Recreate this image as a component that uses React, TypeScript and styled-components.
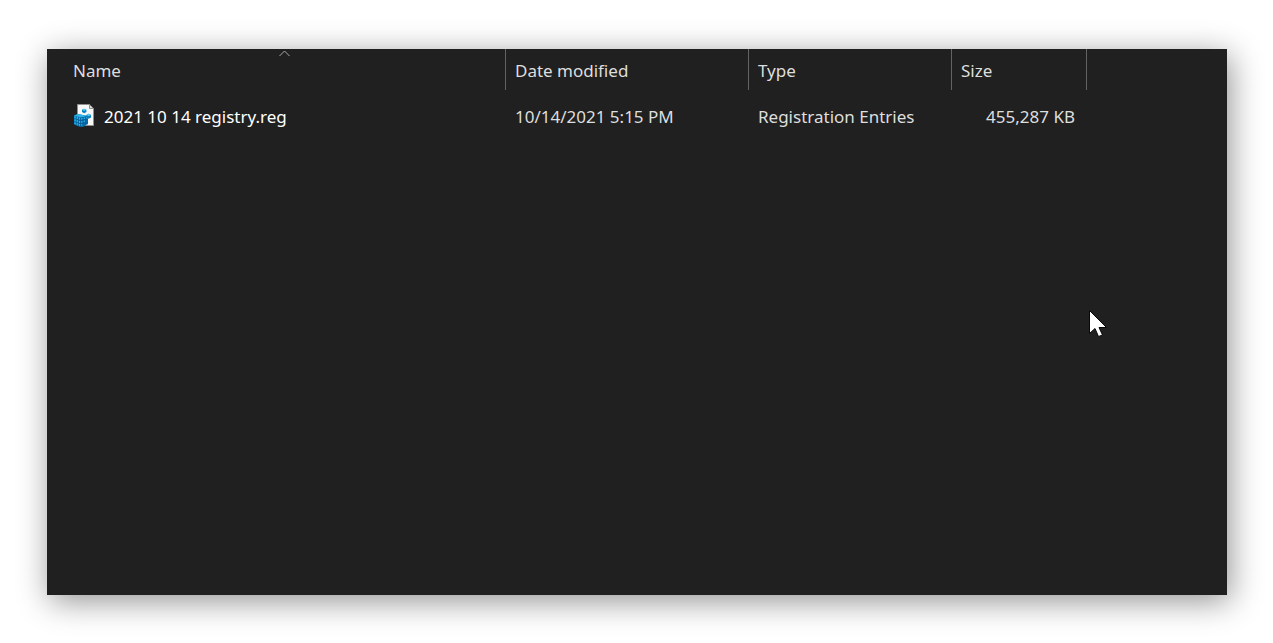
import React from "react";
import styled, { createGlobalStyle } from "styled-components";

const GlobalStyle = createGlobalStyle`
  *, *::before, *::after { box-sizing: border-box; }
  body {
    margin: 0;
    background: #ffffff;
    font-family: "Segoe UI", "Noto Sans", "Open Sans", sans-serif;
    font-size: 17px;
    line-height: 24px;
  }
`;

const Page = styled.main`
  display: flex;
  min-height: 100vh;
  padding: 49px 46px 48px 47px;
`;

const Window = styled.section`
  position: relative;
  flex: 1;
  min-width: 0;
  background: #202020;
  box-shadow: 3px 6px 30px rgba(0, 0, 0, 0.43);
`;

const FileTable = styled.table`
  width: 100%;
  table-layout: fixed;
  border-collapse: separate;
  border-spacing: 0;
  color: #dedede;
`;

const Column = styled.col<{ $width?: number }>`
  width: ${({ $width }) => ($width ? `${$width}px` : "auto")};
`;

const HeaderCell = styled.th<{ $first?: boolean }>`
  position: relative;
  height: 41px;
  padding: 0;
  border-right: 1px solid #636363;
  font-weight: 400;
  text-align: left;

  button {
    display: block;
    width: 100%;
    height: 41px;
    padding: 2px 9px 0 ${({ $first }) => ($first ? 26 : 9)}px;
    border: 0;
    background: transparent;
    color: inherit;
    font: inherit;
    text-align: left;
  }
`;

const SortArrow = styled.svg`
  position: absolute;
  top: 0;
  left: 232px;
  width: 12px;
  height: 8px;
`;

const Cell = styled.td<{ $first?: boolean; $end?: boolean }>`
  height: 54px;
  padding: 0 ${({ $end }) => ($end ? 12 : 9)}px 0 ${({ $first }) => ($first ? 26 : 9)}px;
  text-align: ${({ $end }) => ($end ? "right" : "left")};
  white-space: nowrap;
`;

const FileLink = styled.a`
  display: flex;
  align-items: center;
  gap: 9px;
  color: #ffffff;
  text-decoration: none;
`;

const FileIcon = styled.svg`
  flex: none;
  width: 22px;
  height: 26px;
`;

const Pointer = styled.svg`
  position: absolute;
  top: 260px;
  right: 119px;
  width: 20px;
  height: 30px;
`;

const RegistryIcon = () => (
  <FileIcon viewBox="0 0 22 26" aria-hidden="true">
    <path d="M4.5 .5H16.5L20.5 4.5V21.5H4.5Z" fill="#f7f7f7" stroke="#8f8f8f" />
    <path d="M16.5 .5V4.5H20.5Z" fill="#dcdcdc" stroke="#8f8f8f" strokeLinejoin="round" />
    <path d="M1 11.5L5 10L10 11L15 12V20L12 21V22L7.5 23L1 20.5Z" fill="#0a7fbe" />
    <path d="M1 11.5L5 10L15 12L7.5 13.5Z" fill="#2fb4e8" />
    <path d="M7.5 13.5L15 12V20L12 21V22L7.5 23Z" fill="#0a6cab" />
    <path d="M1 14.5L7.5 16.5L15 15M1 17.5L7.5 19.7L15 18M3.2 12V21M5.4 12.7V22M7.5 13.5V23M10 13V22.5M12.5 12.6V21.5" stroke="#07588c" strokeWidth=".5" fill="none" />
    <path d="M2.1 12.5V14.2M4.3 13.2V14.9M6.5 14V15.6M2.1 15.5V17.2M4.3 16.3V18M6.5 17V18.7M2.1 18.5V20M4.3 19.2V20.8M6.5 20V21.6M8.8 14V15.6M11.3 13.4V15M13.8 13V14.4M8.8 17V18.7M11.3 16.5V18M8.8 20.3V21.6" stroke="#35baf0" strokeWidth="1.1" />
    <path d="M9 5.8L11.2 4.7L13.4 5.8V8L11.2 9.3L9 8Z" fill="#0a7fbe" />
    <path d="M9 5.8L11.2 4.7L13.4 5.8L11.2 7Z" fill="#4fcdf7" />
    <path d="M13.4 11L15.7 9.8L18 11V13.4L15.7 14.7L13.4 13.4Z" fill="#0a7fbe" />
    <path d="M13.4 11L15.7 9.8L18 11L15.7 12.3Z" fill="#4fcdf7" />
  </FileIcon>
);

const columns = ["Name", "Date modified", "Type", "Size"];

const files = [
  { name: "2021 10 14 registry.reg", modified: "10/14/2021 5:15 PM", type: "Registration Entries", size: "455,287 KB" },
];

export default function App() {
  return (
    <>
      <GlobalStyle />
      <Page>
        <Window aria-label="Files">
          <FileTable>
            <colgroup>
              <Column $width={459} />
              <Column $width={243} />
              <Column $width={203} />
              <Column $width={135} />
              <Column />
            </colgroup>
            <thead>
              <tr>
                {columns.map((label, i) => (
                  <HeaderCell key={label} scope="col" $first={i === 0} aria-sort={i === 0 ? "ascending" : undefined}>
                    <button type="button">{label}</button>
                    {i === 0 && (
                      <SortArrow viewBox="0 0 12 8" aria-hidden="true">
                        <path d="M.5 7L5.5 2L10.5 7" fill="none" stroke="#a8a8a8" />
                      </SortArrow>
                    )}
                  </HeaderCell>
                ))}
                <td />
              </tr>
            </thead>
            <tbody>
              {files.map((file) => (
                <tr key={file.name}>
                  <Cell $first>
                    <FileLink href="#file">
                      <RegistryIcon />
                      {file.name}
                    </FileLink>
                  </Cell>
                  <Cell>{file.modified}</Cell>
                  <Cell>{file.type}</Cell>
                  <Cell $end>{file.size}</Cell>
                  <td />
                </tr>
              ))}
            </tbody>
          </FileTable>
          <Pointer viewBox="0 0 20 30" aria-hidden="true">
            <path d="M1.5 1.5V24.5L7 19.5L10.5 27.5L14.5 26L11 18.5H18.5Z" fill="#ffffff" stroke="#080808" />
          </Pointer>
        </Window>
      </Page>
    </>
  );
}
